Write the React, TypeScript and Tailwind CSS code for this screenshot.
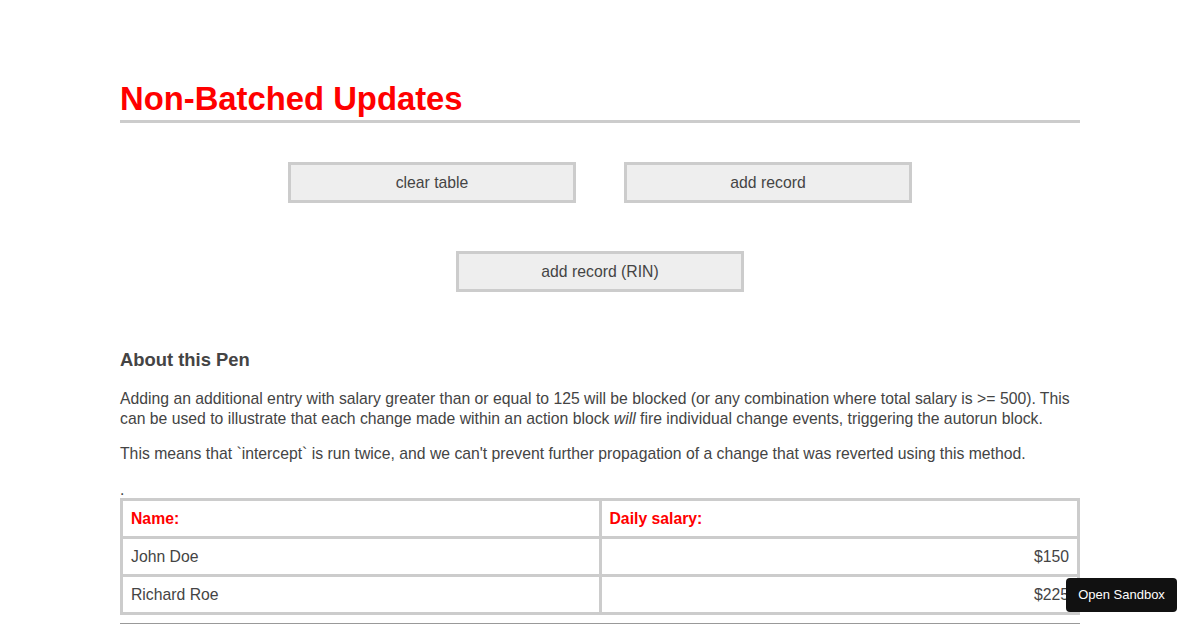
import React from "react";

const rows = [
  { name: "John Doe", salary: 150 },
  { name: "Richard Roe", salary: 225 },
];

function Btn({ label }: { label: string }) {
  return (
    <button className="w-[288px] h-[41px] border-[3px] border-[#ccc] bg-[#eee] text-[15.75px] text-[#444]">
      {label}
    </button>
  );
}

export default function App() {
  return (
    <div className="relative w-[1200px] h-[630px] overflow-hidden bg-white text-[#444] font-['Liberation_Sans',Arial,sans-serif]">
      <div className="mx-auto w-[960px] pt-[80px]">
        <h1 className="text-[32.8px] leading-[38px] font-bold text-[#f00] border-b-[3px] border-[#ccc] pb-[2px]">
          Non-Batched Updates
        </h1>

        <div className="flex justify-center gap-[48px] mt-[39px]">
          <Btn label="clear table" />
          <Btn label="add record" />
        </div>
        <div className="flex justify-center mt-[48px]">
          <Btn label="add record (RIN)" />
        </div>

        <h3 className="mt-[57px] text-[18.4px] leading-[22px] font-bold">About this Pen</h3>
        <p className="mt-[18px] text-[15.75px] leading-[20px]">
          Adding an additional entry with salary greater than or equal to 125 will be blocked (or any combination where total salary is &gt;= 500). This can be used to illustrate that each change made within an action block <em>will</em> fire individual change events, triggering the autorun block.
        </p>
        <p className="mt-[15px] text-[15.75px] leading-[20px]">
          This means that `intercept` is run twice, and we can't prevent further propagation of a change that was reverted using this method.
        </p>
        <div className="mt-[16px] text-[15.75px] leading-[20px] h-[18px]">.</div>

        <table className="w-full border-collapse border-[3px] border-[#ccc] text-[15.75px]">
          <thead>
            <tr>
              <th className="w-1/2 border-[3px] border-[#ccc] px-[8px] py-[8px] leading-[19px] text-left font-bold text-[#f00]">Name:</th>
              <th className="w-1/2 border-[3px] border-[#ccc] px-[8px] py-[8px] leading-[19px] text-left font-bold text-[#f00]">Daily salary:</th>
            </tr>
          </thead>
          <tbody>
            {rows.map((r) => (
              <tr key={r.name}>
                <td className="border-[3px] border-[#ccc] px-[8px] py-[8px] leading-[19px]">{r.name}</td>
                <td className="border-[3px] border-[#ccc] px-[8px] py-[8px] leading-[19px] text-right">${r.salary}</td>
              </tr>
            ))}
          </tbody>
        </table>
        <hr className="mt-[8px] border-0 border-t border-[#999]" />
      </div>

      <div className="absolute left-[1066px] top-[578px] w-[111px] h-[34px] rounded-[4px] bg-[#111] text-white text-[13px] flex items-center justify-center">
        Open Sandbox
      </div>
    </div>
  );
}
